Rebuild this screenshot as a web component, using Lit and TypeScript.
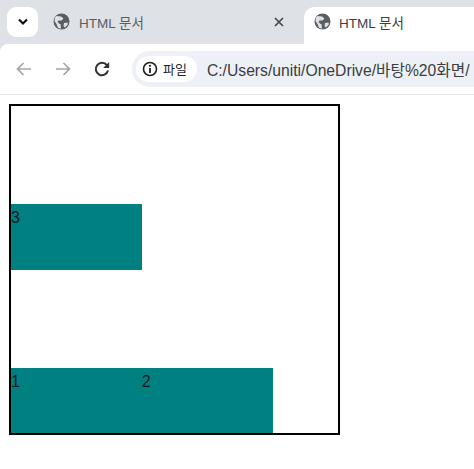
import { LitElement, css, html, svg } from 'lit'
import { customElement } from 'lit/decorators.js'

const globe = svg`<svg class="globe" width="17" height="17" viewBox="0 0 17 17">
  <circle cx="8.5" cy="8.5" r="8" fill="#5a5e63"/>
  <path d="M3.5 3 L8 3.5 L10.5 5.5 L8.5 7.5 L5.5 7.5 L4.5 9 L6.5 11 L7.5 11 L8 15.8 L5 14.8 L3.5 11 L1.5 8 L2 4.5Z M11 10 L14.5 9.5 L14.8 11.5 L12 14.5 L10.5 13Z" fill="#dee1e6"/>
</svg>`

@customElement('app-root')
export class AppRoot extends LitElement {
  render() {
    return html`
      <div class="tabstrip">
        <div class="menu-btn">
          <svg width="12" height="8" viewBox="0 0 12 8"><path d="M2 1.5 L6 5.5 L10 1.5" fill="none" stroke="#111" stroke-width="2.2"/></svg>
        </div>
        <div class="tab inactive">
          ${globe}
          <span class="title">HTML 문서</span>
          <svg class="close" width="10" height="10" viewBox="0 0 10 10"><path d="M1 1 L9 9 M9 1 L1 9" stroke="#45484d" stroke-width="1.7"/></svg>
        </div>
        <div class="tab active">
          ${globe}
          <span class="title">HTML 문서</span>
        </div>
      </div>
      <div class="toolbar">
        <svg class="nav back" width="18" height="16" viewBox="0 0 18 16"><path d="M16 8 H3 M8.5 2 L2.5 8 L8.5 14" fill="none" stroke="#a3a5a8" stroke-width="1.7"/></svg>
        <svg class="nav forward" width="18" height="16" viewBox="0 0 18 16"><path d="M2 8 H15 M9.5 2 L15.5 8 L9.5 14" fill="none" stroke="#a3a5a8" stroke-width="1.7"/></svg>
        <svg class="nav reload" width="16" height="16" viewBox="0 0 16 16"><path d="M14 9.6 A6.2 6.2 0 1 1 12.9 4.2" fill="none" stroke="#2f3134" stroke-width="2"/><path d="M15.2 1 V7 H9.2Z" fill="#2f3134"/></svg>
        <div class="omnibox">
          <div class="chip">
            <svg width="16" height="16" viewBox="0 0 16 16"><circle cx="8" cy="8" r="6.5" fill="none" stroke="#1f1f1f" stroke-width="1.6"/><path d="M8 7 V12" stroke="#1f1f1f" stroke-width="1.8"/><circle cx="8" cy="4.8" r="1.1" fill="#1f1f1f"/></svg>
            <span>파일</span>
          </div>
          <span class="url">C:/Users/uniti/OneDrive/바탕%20화면/</span>
        </div>
      </div>
      <div class="page">
        <div class="grid">
          <div class="cell mid">3</div>
          <div class="cell bottom">1</div>
          <div class="cell bottom">2</div>
        </div>
      </div>
    `
  }

  static styles = css`
    :host {
      display: block;
      width: 474px;
      height: 469px;
      overflow: hidden;
      background: #dee1e6;
      font-family: 'Liberation Sans', 'Noto Sans CJK KR', sans-serif;
    }
    .tabstrip {
      display: flex;
      height: 44px;
      background: #dee1e6;
      box-sizing: border-box;
      padding-top: 7px;
    }
    .menu-btn {
      display: flex;
      align-items: center;
      justify-content: center;
      width: 31px;
      height: 30px;
      margin-left: 7px;
      background: #fff;
      border-radius: 9px;
    }
    .tab {
      display: flex;
      align-items: center;
      height: 37px;
      box-sizing: border-box;
      font-size: 13.5px;
    }
    .tab .title {
      margin-left: 9px;
      padding-bottom: 7px;
    }
    .tab .globe {
      margin-bottom: 8px;
      flex: none;
    }
    .inactive {
      width: 266px;
      padding-left: 15px;
      color: #5a5e63;
      background: #dee1e6;
      border-bottom-right-radius: 11px;
    }
    .inactive .close {
      margin-left: auto;
      margin-right: 20px;
      margin-bottom: 7px;
    }
    .active {
      flex: 1;
      padding-left: 10px;
      color: #3c4043;
      background: #fff;
      border-radius: 11px 0 0 0;
    }
    .active .title {
      margin-left: 8px;
    }
    .toolbar {
      display: flex;
      align-items: center;
      height: 51px;
      box-sizing: border-box;
      background: #fff;
      border-bottom: 1px solid #e6e7e9;
      border-top-left-radius: 8px;
      padding-left: 15px;
    }
    .nav {
      flex: none;
    }
    .forward {
      margin-left: 21px;
    }
    .reload {
      margin-left: 22px;
    }
    .omnibox {
      display: flex;
      align-items: center;
      flex: none;
      width: 342px;
      height: 36px;
      margin-left: 22px;
      padding-left: 4px;
      box-sizing: border-box;
      background: #edf0f7;
      border-radius: 18px 0 0 18px;
      white-space: nowrap;
      overflow: hidden;
    }
    .chip {
      display: flex;
      align-items: center;
      gap: 5px;
      height: 26px;
      padding: 0 10px 0 6px;
      background: #fff;
      border-radius: 13px;
      font-size: 13px;
      color: #1f1f1f;
    }
    .chip span {
      padding-bottom: 2px;
    }
    .url {
      margin-left: 10px;
      font-size: 15.7px;
      color: #3a3d41;
    }
    .page {
      height: 374px;
      padding: 9px;
      box-sizing: border-box;
      background: #fff;
    }
    .grid {
      display: grid;
      grid-template-columns: repeat(5, 1fr);
      grid-template-rows: 3fr 2fr 3fr 2fr;
      width: 331px;
      height: 331px;
      box-sizing: border-box;
      border: 2px solid #000;
      font-size: 16px;
      line-height: 28px;
      color: #11181c;
    }
    .cell {
      grid-column-end: span 2;
      background: #008080;
    }
    .mid {
      grid-row: 2;
      grid-column-start: 1;
    }
    .bottom {
      grid-row: 4;
    }
  `
}
